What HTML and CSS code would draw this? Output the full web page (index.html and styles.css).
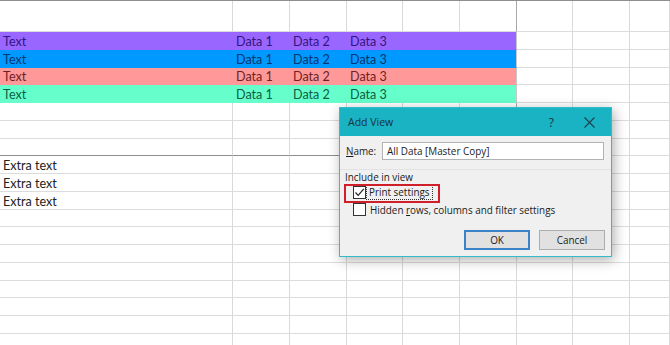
FILE: index.html
```html
<!DOCTYPE html>
<html>
<head>
<meta charset="utf-8">
<link rel="stylesheet" href="styles.css">
</head>
<body>
<div class="sheet">
  <div class="row r1"><div class="c"></div><div class="c"></div><div class="c"></div><div class="c"></div><div class="c"></div><div class="c edge"></div><div class="c"></div><div class="c"></div><div class="c"></div></div>
  <div class="row fill purple"><div class="c f">Text</div><div class="c f">Data 1</div><div class="c f">Data 2</div><div class="c f">Data 3</div><div class="c f"></div><div class="c f edge"></div><div class="c"></div><div class="c"></div><div class="c"></div></div>
  <div class="row fill blue"><div class="c f">Text</div><div class="c f">Data 1</div><div class="c f">Data 2</div><div class="c f">Data 3</div><div class="c f"></div><div class="c f edge"></div><div class="c"></div><div class="c"></div><div class="c"></div></div>
  <div class="row fill salmon"><div class="c f">Text</div><div class="c f">Data 1</div><div class="c f">Data 2</div><div class="c f">Data 3</div><div class="c f"></div><div class="c f edge"></div><div class="c"></div><div class="c"></div><div class="c"></div></div>
  <div class="row fill teal"><div class="c f">Text</div><div class="c f">Data 1</div><div class="c f">Data 2</div><div class="c f">Data 3</div><div class="c f"></div><div class="c f edge"></div><div class="c"></div><div class="c"></div><div class="c"></div></div>
  <div class="row"><div class="c"></div><div class="c"></div><div class="c"></div><div class="c"></div><div class="c"></div><div class="c edge"></div><div class="c"></div><div class="c"></div><div class="c"></div></div>
  <div class="row"><div class="c"></div><div class="c"></div><div class="c"></div><div class="c"></div><div class="c"></div><div class="c edge"></div><div class="c"></div><div class="c"></div><div class="c"></div></div>
  <div class="row brk"><div class="c b"></div><div class="c b"></div><div class="c b"></div><div class="c b"></div><div class="c b"></div><div class="c b edge"></div><div class="c"></div><div class="c"></div><div class="c"></div></div>
  <div class="row"><div class="c">Extra text</div><div class="c"></div><div class="c"></div><div class="c"></div><div class="c"></div><div class="c"></div><div class="c"></div><div class="c"></div><div class="c"></div></div>
  <div class="row"><div class="c">Extra text</div><div class="c"></div><div class="c"></div><div class="c"></div><div class="c"></div><div class="c"></div><div class="c"></div><div class="c"></div><div class="c"></div></div>
  <div class="row"><div class="c">Extra text</div><div class="c"></div><div class="c"></div><div class="c"></div><div class="c"></div><div class="c"></div><div class="c"></div><div class="c"></div><div class="c"></div></div>
  <div class="row"><div class="c"></div><div class="c"></div><div class="c"></div><div class="c"></div><div class="c"></div><div class="c"></div><div class="c"></div><div class="c"></div><div class="c"></div></div>
  <div class="row"><div class="c"></div><div class="c"></div><div class="c"></div><div class="c"></div><div class="c"></div><div class="c"></div><div class="c"></div><div class="c"></div><div class="c"></div></div>
  <div class="row"><div class="c"></div><div class="c"></div><div class="c"></div><div class="c"></div><div class="c"></div><div class="c"></div><div class="c"></div><div class="c"></div><div class="c"></div></div>
  <div class="row"><div class="c"></div><div class="c"></div><div class="c"></div><div class="c"></div><div class="c"></div><div class="c"></div><div class="c"></div><div class="c"></div><div class="c"></div></div>
  <div class="row"><div class="c"></div><div class="c"></div><div class="c"></div><div class="c"></div><div class="c"></div><div class="c"></div><div class="c"></div><div class="c"></div><div class="c"></div></div>
  <div class="row"><div class="c"></div><div class="c"></div><div class="c"></div><div class="c"></div><div class="c"></div><div class="c"></div><div class="c"></div><div class="c"></div><div class="c"></div></div>
  <div class="row"><div class="c"></div><div class="c"></div><div class="c"></div><div class="c"></div><div class="c"></div><div class="c"></div><div class="c"></div><div class="c"></div><div class="c"></div></div>
  <div class="row"><div class="c"></div><div class="c"></div><div class="c"></div><div class="c"></div><div class="c"></div><div class="c"></div><div class="c"></div><div class="c"></div><div class="c"></div></div>
</div>

<div class="dialog">
  <div class="titlebar">
    <span class="title">Add View</span>
    <span class="help">?</span>
    <svg class="close" width="11" height="11" viewBox="0 0 11 11"><path d="M0.5 0.5 L10.5 10.5 M10.5 0.5 L0.5 10.5" stroke="#1e3f4d" stroke-width="1.1" fill="none"/></svg>
  </div>
  <div class="dbody">
    <div class="namerow">
      <span class="namelbl"><u>N</u>ame:</span>
      <div class="input">All Data [Master Copy]</div>
    </div>
    <div class="sep"></div>
    <div class="group">Include in view</div>
    <div class="check">
      <span class="box"><svg width="11" height="11" viewBox="0 0 11 11"><path d="M1.5 5.5 L4.2 8.4 L9.8 1.8" stroke="#222" stroke-width="1.2" fill="none"/></svg></span>
      <span class="lbl focus">Print settings</span>
    </div>
    <div class="check">
      <span class="box"></span>
      <span class="lbl">Hidden <u>r</u>ows, columns and filter settings</span>
    </div>
    <div class="buttons">
      <button class="btn default">OK</button>
      <button class="btn">Cancel</button>
    </div>
  </div>
</div>
<div class="highlight"></div>
</body>
</html>
```

FILE: styles.css
```css
html, body {
  margin: 0;
  padding: 0;
  background: #ffffff;
  overflow: hidden;
}

body {
  width: 670px;
  height: 345px;
  position: relative;
}

.sheet {
  display: grid;
  grid-template-columns: 233px 57px 57px 56px 57px 57px 56px 57px 40px;
  grid-template-rows: 31px;
  grid-auto-rows: 17.75px;
  border-top: 1px solid #8e8e8e;
  font-family: "Lato", "Liberation Sans", sans-serif;
  font-size: 12.6px;
  color: #222222;
}

.row {
  display: contents;
}

.c {
  box-sizing: border-box;
  border-right: 1px solid #d9d9d9;
  border-bottom: 1px solid #dcdcdc;
  padding: 2px 0 0 3px;
  white-space: nowrap;
  display: flex;
  align-items: center;
  overflow: visible;
}

.c.edge {
  border-right-color: #a9a9a9;
}

.c.b {
  border-bottom-color: #8e8e8e;
}

.purple .f { background: #9966ff; border-color: #9966ff; color: #341580; }
.blue .f { background: #0099ff; border-color: #0099ff; color: #08346e; }
.salmon .f { background: #ff9999; border-color: #ff9999; color: #6e1f1f; }
.teal .f { background: #66ffcc; border-color: #66ffcc; color: #0c5e42; }

.fill .f.edge {
  border-right-color: #c8c8c8;
}

/* dialog */
.dialog {
  position: absolute;
  left: 339px;
  top: 107px;
  width: 271px;
  border: 1px solid #2fbccb;
  background: #f0f0f0;
  box-shadow: 2px 3px 12px rgba(0, 0, 0, 0.32);
  font-family: "Open Sans", "Noto Sans", sans-serif;
  font-size: 9.9px;
  color: #1b1b1b;
}

.titlebar {
  height: 28px;
  background: #19b3c3;
  display: flex;
  align-items: center;
  padding: 0 16px 0 8px;
  color: #17323e;
}

.title {
  flex: 1;
  font-size: 10.5px;
}

.help {
  font-size: 12px;
  margin-right: 30px;
}

.close {
  display: block;
}

.dbody {
  padding: 6px 6px 6px 6px;
}

.namerow {
  display: flex;
  align-items: center;
}

.namelbl {
  width: 36px;
}

.input {
  box-sizing: border-box;
  width: 222px;
  height: 18px;
  background: #ffffff;
  border: 1px solid #b3b3b3;
  padding-left: 4px;
  line-height: 16px;
  white-space: nowrap;
}

.sep {
  height: 1px;
  background: #e2e2e2;
  margin: 9px -6px 0 -6px;
}

.group {
  height: 14px;
  line-height: 14px;
  margin-left: -1px;
}

.check {
  display: flex;
  align-items: center;
  height: 17px;
  padding-left: 7px;
}

.box {
  box-sizing: border-box;
  width: 13px;
  height: 13px;
  border: 1px solid #333333;
  background: #ffffff;
  display: flex;
  align-items: center;
  justify-content: center;
}

.box svg {
  display: block;
}

.lbl {
  margin-left: 4px;
  white-space: nowrap;
}

.lbl.focus {
  margin-left: 0;
  padding: 0 2px;
  border: 1px dotted #333333;
  line-height: 13px;
}

.buttons {
  display: flex;
  justify-content: flex-end;
  gap: 9px;
  margin-top: 12px;
}

.btn {
  box-sizing: border-box;
  width: 66px;
  height: 20px;
  margin: 0;
  padding: 0;
  background: #e1e1e1;
  border: 1px solid #adadad;
  font-family: "Open Sans", "Noto Sans", sans-serif;
  font-size: 9.9px;
  color: #1b1b1b;
}

.btn.default {
  border: 2px solid #3a83c9;
}

.highlight {
  position: absolute;
  left: 344px;
  top: 184px;
  width: 92px;
  height: 15px;
  border: 2px solid #d11f2a;
}
```
